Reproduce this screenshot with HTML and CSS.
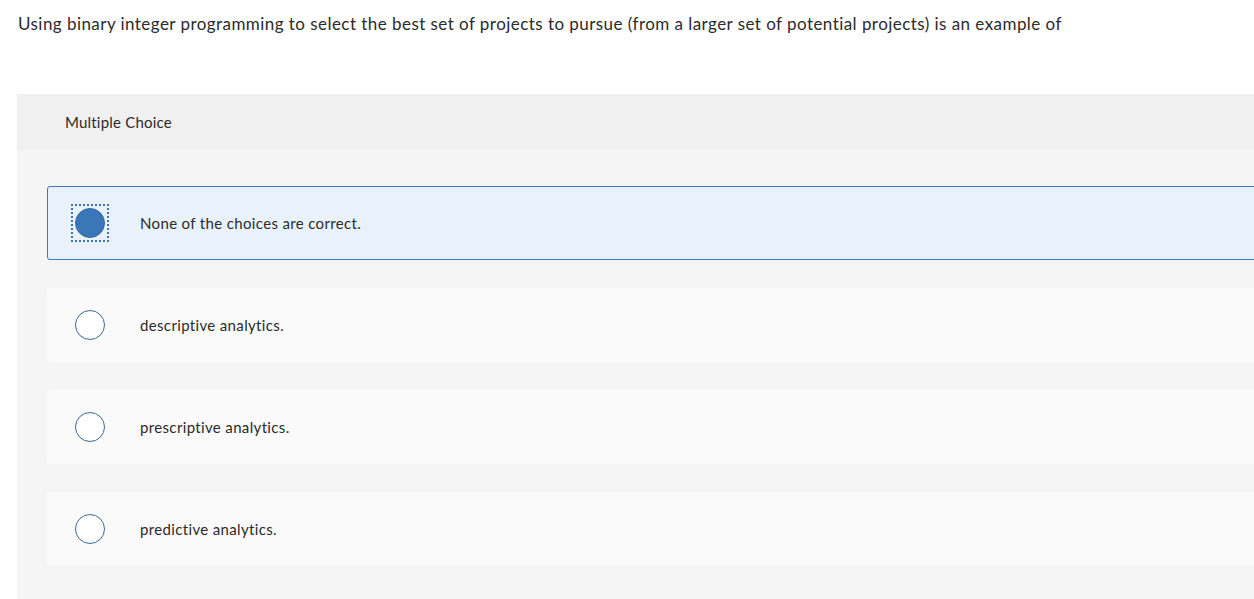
FILE: index.html
```html
<!DOCTYPE html>
<html>
<head>
<meta charset="utf-8">
<link rel="stylesheet" href="styles.css">
</head>
<body>
<div class="page">
  <p class="question">Using binary integer programming to select the best set of projects to pursue (from a larger set of potential projects) is an example of</p>
  <div class="panel">
    <div class="panel-head">Multiple Choice</div>
    <div class="panel-body">
      <div class="option selected">
        <span class="radio-wrap focused"><span class="radio checked"></span></span>
        <span class="label">None of the choices are correct.</span>
      </div>
      <div class="option">
        <span class="radio-wrap"><span class="radio"></span></span>
        <span class="label">descriptive analytics.</span>
      </div>
      <div class="option">
        <span class="radio-wrap"><span class="radio"></span></span>
        <span class="label">prescriptive analytics.</span>
      </div>
      <div class="option">
        <span class="radio-wrap"><span class="radio"></span></span>
        <span class="label">predictive analytics.</span>
      </div>
    </div>
  </div>
</div>
</body>
</html>
```
FILE: styles.css
```css
html, body {
  margin: 0;
  padding: 0;
  background: #ffffff;
  overflow: hidden;
}
body {
  font-family: "Lato", "Open Sans", sans-serif;
  color: #2b2b2b;
}
.page {
  width: 1300px;
}
.question {
  margin: 0;
  padding: 13px 0 0 18px;
  height: 94px;
  box-sizing: border-box;
  font-size: 17px;
  line-height: 22px;
  letter-spacing: 0.45px;
}
.panel {
  margin-left: 17px;
}
.panel-head {
  background: #f0f0f0;
  height: 56px;
  display: flex;
  align-items: center;
  padding-left: 48px;
  font-size: 15px;
  letter-spacing: 0.2px;
}
.panel-body {
  background: #f5f5f5;
  padding: 36px 0 40px 30px;
  display: flex;
  flex-direction: column;
  gap: 28px;
}
.option {
  background: #fafafa;
  height: 74px;
  box-sizing: border-box;
  border-radius: 3px;
  display: flex;
  align-items: center;
  padding-left: 27px;
  border: 1px solid transparent;
}
.option.selected {
  background: #e9f1fa;
  border-color: #3b78bf;
}
.radio-wrap {
  width: 30px;
  height: 30px;
  display: flex;
  margin-right: 35px;
}
.radio {
  width: 30px;
  height: 30px;
  box-sizing: border-box;
  border-radius: 50%;
  border: 1.5px solid #3a6896;
  background: #ffffff;
}
.radio.checked {
  background: #3b76b9;
  border-color: #35689f;
}
.focused {
  outline: 2px dotted #3b76b9;
  outline-offset: 2px;
}
.label {
  font-size: 15px;
  letter-spacing: 0.35px;
}
```
